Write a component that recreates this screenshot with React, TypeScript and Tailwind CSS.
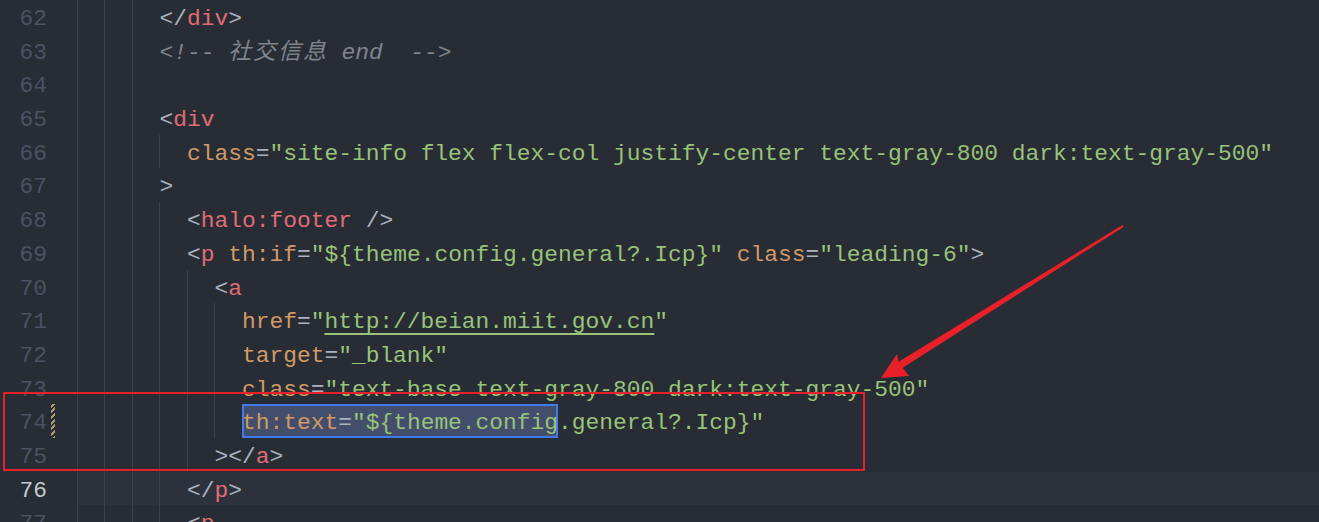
type Kind = "p" | "tag" | "attr" | "str" | "url" | "cm" | "cjk" | "txt" | "sel";

type Tok = [Kind, string];

interface Line {
  n: number;
  guides: number;
  toks: Tok[];
  active?: boolean;
  modified?: boolean;
}

const color: Record<Kind, string> = {
  p: "text-[#abb2bf]",
  tag: "text-[#e06c75]",
  attr: "text-[#d19a66]",
  str: "text-[#98c379]",
  url: "text-[#98c379] underline decoration-[#98c379] decoration-2 underline-offset-[5px]",
  cm: "text-[#7f848e] italic",
  cjk: "text-[#7f848e] italic tracking-[2px]",
  txt: "text-[#abb2bf]",
  sel: "text-[#98c379]",
};

const lines: Line[] = [
  { n: 62, guides: 3, toks: [["p", "</"], ["tag", "div"], ["p", ">"]] },
  { n: 63, guides: 3, toks: [["cm", "<!-- "], ["cjk", "社交信息"], ["cm", " end  -->"]] },
  { n: 64, guides: 3, toks: [] },
  { n: 65, guides: 3, toks: [["p", "<"], ["tag", "div"]] },
  {
    n: 66,
    guides: 4,
    toks: [
      ["attr", "class"],
      ["p", "="],
      ["str", '"site-info flex flex-col justify-center text-gray-800 dark:text-gray-500"'],
    ],
  },
  { n: 67, guides: 3, toks: [["p", ">"]] },
  { n: 68, guides: 4, toks: [["p", "<"], ["tag", "halo:footer"], ["txt", " "], ["p", "/>"]] },
  {
    n: 69,
    guides: 4,
    toks: [
      ["p", "<"],
      ["tag", "p"],
      ["txt", " "],
      ["attr", "th:if"],
      ["p", "="],
      ["str", '"${theme.config.general?.Icp}"'],
      ["txt", " "],
      ["attr", "class"],
      ["p", "="],
      ["str", '"leading-6"'],
      ["p", ">"],
    ],
  },
  { n: 70, guides: 5, toks: [["p", "<"], ["tag", "a"]] },
  {
    n: 71,
    guides: 6,
    toks: [
      ["attr", "href"],
      ["p", "="],
      ["str", '"'],
      ["url", "http://beian.miit.gov.cn"],
      ["str", '"'],
    ],
  },
  { n: 72, guides: 6, toks: [["attr", "target"], ["p", "="], ["str", '"_blank"']] },
  {
    n: 73,
    guides: 6,
    toks: [["attr", "class"], ["p", "="], ["str", '"text-base text-gray-800 dark:text-gray-500"']],
  },
  { n: 74, guides: 6, modified: true, toks: [["sel", ""], ["str", '.general?.Icp}"']] },
  { n: 75, guides: 5, toks: [["p", "></"], ["tag", "a"], ["p", ">"]] },
  { n: 76, guides: 4, active: true, toks: [["p", "</"], ["tag", "p"], ["p", ">"]] },
  { n: 77, guides: 4, toks: [["p", "<"], ["tag", "p"]] },
];

// editor text sits a few px below the middle of its row
const nudge = "inline-block translate-y-[3px]";

function Selection() {
  return (
    <span className="inline-block h-full bg-[#434e6c] shadow-[inset_0_0_0_2px_#3f7bea]">
      <span className={`${nudge} text-[#d19a66]`}>th:text</span>
      <span className={`${nudge} text-[#abb2bf]`}>=</span>
      <span className={`${nudge} text-[#98c379]`}>"${"{"}theme.config</span>
    </span>
  );
}

function CodeLine({ line }: { line: Line }) {
  return (
    <div className="flex h-[33.7px] leading-[33.7px]">
      <div className="flex w-[77px] shrink-0">
        <span
          className={`w-[47px] text-right ${line.active ? "text-[#c5cad3]" : "text-[#4b5263]"}`}
        >
          <span className={nudge}>{line.n}</span>
        </span>
        {line.modified && (
          <span className="ml-[4px] w-[4px] self-stretch bg-[repeating-linear-gradient(-45deg,#a89c68_0px,#a89c68_2px,transparent_2px,transparent_4px)]" />
        )}
      </div>
      <div className={`flex min-w-0 flex-1 whitespace-pre ${line.active ? "bg-[#2c313b]" : ""}`}>
        {Array.from({ length: line.guides }).map((_, i) => (
          <span key={i} className="w-[2ch] shrink-0 border-l border-[#3b4049]" />
        ))}
        <span>
          {line.toks.map(([k, t], i) =>
            k === "sel" ? (
              <Selection key={i} />
            ) : (
              <span key={i} className={`${nudge} ${color[k]}`}>
                {t}
              </span>
            )
          )}
        </span>
      </div>
    </div>
  );
}

export default function App() {
  return (
    <div className="relative h-[522px] w-[1319px] overflow-hidden bg-[#282c34] font-['Liberation_Mono','Noto_Sans_CJK_SC',monospace] text-[22.92px]">
      {lines.map((l) => (
        <CodeLine key={l.n} line={l} />
      ))}

      {/* annotation box */}
      <div className="pointer-events-none absolute left-[3px] top-[392px] h-[79px] w-[862px] border-2 border-[#e8202a]" />

      {/* annotation arrow */}
      <svg className="pointer-events-none absolute inset-0" width="1319" height="522">
        <polygon
          points="881,378 909,376 902.8,367.8 1123.6,226.9 1122.4,225.1 898.6,361.8 897,354"
          fill="#e8202a"
        />
      </svg>
    </div>
  );
}
